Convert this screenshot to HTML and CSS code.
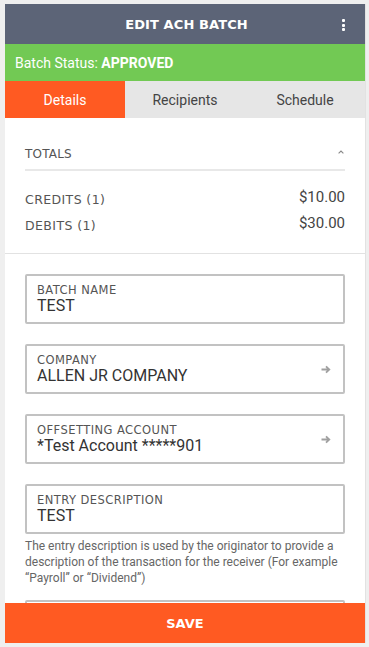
FILE: index.html
```html
<!DOCTYPE html>
<html>
<head>
<meta charset="utf-8">
<link rel="stylesheet" href="styles.css">
</head>
<body>
<div class="app">
  <header class="topbar">
    <span class="title">EDIT ACH BATCH</span>
    <span class="kebab"><i></i><i></i><i></i></span>
  </header>
  <div class="status">Batch Status: <b>APPROVED</b></div>
  <nav class="tabs">
    <div class="tab active">Details</div>
    <div class="tab">Recipients</div>
    <div class="tab">Schedule</div>
  </nav>
  <main class="content">
    <section class="totals">
      <div class="totals-head">
        <span class="caps">TOTALS</span>
        <svg class="chev" width="6" height="4" viewBox="0 0 6 4"><path d="M0.6 3.4 L3 1 L5.4 3.4" fill="none" stroke="#888" stroke-width="1.1"/></svg>
      </div>
      <div class="totals-body">
        <div class="row"><span class="caps big">CREDITS (1)</span><span class="amt">$10.00</span></div>
        <div class="row"><span class="caps big">DEBITS (1)</span><span class="amt">$30.00</span></div>
      </div>
    </section>
    <section class="form">
      <div class="field">
        <div class="flabel">BATCH NAME</div>
        <div class="fvalue">TEST</div>
      </div>
      <div class="field">
        <div class="ftext">
          <div class="flabel">COMPANY</div>
          <div class="fvalue">ALLEN JR COMPANY</div>
        </div>
        <svg class="arrow" width="10" height="9" viewBox="0 0 10 9"><path d="M0.5 4.5 H8 M5 1.3 L8.3 4.5 L5 7.7" fill="none" stroke="#a0a0a0" stroke-width="1.8"/></svg>
      </div>
      <div class="field">
        <div class="ftext">
          <div class="flabel">OFFSETTING ACCOUNT</div>
          <div class="fvalue">*Test Account *****901</div>
        </div>
        <svg class="arrow" width="10" height="9" viewBox="0 0 10 9"><path d="M0.5 4.5 H8 M5 1.3 L8.3 4.5 L5 7.7" fill="none" stroke="#a0a0a0" stroke-width="1.8"/></svg>
      </div>
      <div class="group">
        <div class="field">
          <div class="flabel">ENTRY DESCRIPTION</div>
          <div class="fvalue">TEST</div>
        </div>
        <p class="help">The entry description is used by the originator to provide a description of the transaction for the receiver (For example “Payroll” or “Dividend”)</p>
      </div>
      <div class="field empty"></div>
    </section>
  </main>
  <button class="save">SAVE</button>
</div>
</body>
</html>
```
FILE: styles.css
```css
html, body {
  margin: 0;
  padding: 0;
}
body {
  background: #efefef;
  width: 369px;
  height: 647px;
  overflow: hidden;
  font-family: Roboto, "Liberation Sans", sans-serif;
}
.app {
  margin: 4px 4px 0 5px;
  width: 360px;
  height: 639px;
  background: #fff;
  display: flex;
  flex-direction: column;
  box-shadow: 1px 0 0 #e2e2e2;
}
.topbar {
  flex: 0 0 40px;
  background: #5c6477;
  display: flex;
  align-items: center;
  justify-content: center;
  position: relative;
}
.title {
  color: #fff;
  font-family: "DejaVu Sans", sans-serif;
  font-weight: bold;
  font-size: 13px;
  letter-spacing: 0.1px;
  margin-left: 3px;
}
.kebab {
  position: absolute;
  right: 20px;
  top: 15px;
  display: flex;
  flex-direction: column;
  gap: 1.5px;
}
.kebab i {
  width: 3px;
  height: 3px;
  background: #fff;
  border-radius: 1px;
}
.status {
  flex: 0 0 37px;
  background: #72c954;
  color: #fff;
  font-size: 14px;
  display: flex;
  align-items: center;
  padding-left: 10px;
  white-space: pre;
}
.status b {
  font-weight: bold;
}
.tabs {
  flex: 0 0 37px;
  display: flex;
  background: #e6e6e6;
}
.tab {
  flex: 1;
  display: flex;
  align-items: center;
  justify-content: center;
  font-size: 14px;
  color: #444;
}
.tab.active {
  background: #ff5a22;
  color: #fff;
}
.content {
  flex: 1;
  overflow: hidden;
}
.caps {
  font-family: "DejaVu Sans", sans-serif;
  font-size: 12px;
  letter-spacing: 0.2px;
  color: #555;
}
.caps.big {
  font-size: 12.5px;
  letter-spacing: 0.4px;
}
.totals {
  border-bottom: 1px solid #e2e2e2;
  padding: 0 20px 15px;
}
.totals-head {
  margin-top: 20px;
  height: 31px;
  display: flex;
  align-items: center;
  justify-content: space-between;
  border-bottom: 2px solid #e8e8e8;
}
.chev {
  margin-right: 1px;
  margin-top: -3px;
}
.totals-body {
  padding-top: 15px;
}
.row {
  height: 26px;
  display: flex;
  align-items: center;
  justify-content: space-between;
}
.amt {
  font-size: 15px;
  color: #444;
  margin-top: -4px;
}
.form {
  padding: 20px;
  display: flex;
  flex-direction: column;
  gap: 20px;
}
.group {
  display: flex;
  flex-direction: column;
  margin-bottom: -6px;
}
.field {
  border: 2px solid #c2c2c2;
  border-radius: 2px;
  padding: 8px 10px 7px;
  display: flex;
  flex-direction: column;
  position: relative;
}
.field.empty {
  height: 30px;
}
.field:has(.arrow) {
  flex-direction: row;
  align-items: center;
  justify-content: space-between;
}
.flabel {
  font-family: "DejaVu Sans", sans-serif;
  font-size: 11.5px;
  letter-spacing: 0.45px;
  line-height: 13px;
  color: #555;
}
.fvalue {
  font-size: 16px;
  line-height: 18px;
  color: #333;
}
.arrow {
  margin-right: 2px;
}
.help {
  margin: 4px 0 0;
  font-size: 12px;
  line-height: 16px;
  color: #666;
}
.save {
  flex: 0 0 40px;
  border: 0;
  margin: 0;
  background: #ff5a22;
  color: #fff;
  font-family: "DejaVu Sans", sans-serif;
  font-weight: bold;
  font-size: 13px;
}
```
